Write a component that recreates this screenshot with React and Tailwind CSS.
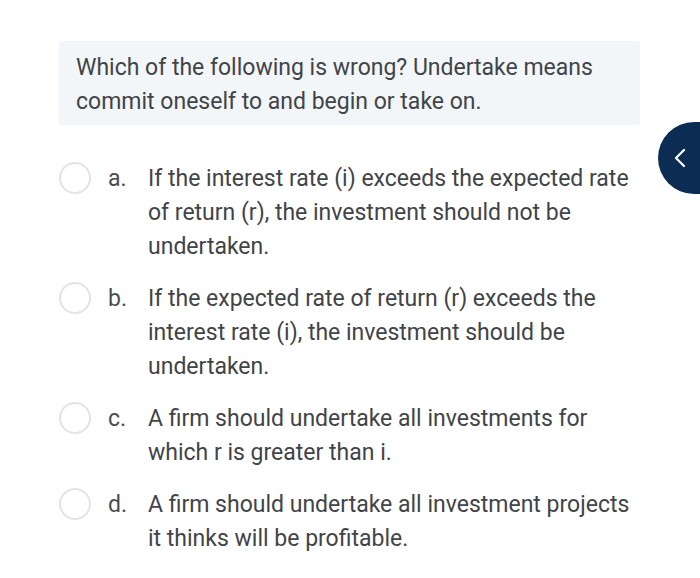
import React from "react";

const options = [
  { l: "a.", t: "If the interest rate (i) exceeds the expected rate of return (r), the investment should not be undertaken." },
  { l: "b.", t: "If the expected rate of return (r) exceeds the interest rate (i), the investment should be undertaken." },
  { l: "c.", t: "A firm should undertake all investments for which r is greater than i." },
  { l: "d.", t: "A firm should undertake all investment projects it thinks will be profitable." },
];

export default function App() {
  return (
    <div
      className="relative w-[700px] h-[578px] bg-white overflow-hidden text-[#414448]"
      style={{ fontFamily: "Roboto, 'Noto Sans', sans-serif" }}
    >
      <div className="pl-[59px] pt-[41px] w-[640px]">
        <div className="bg-[#f3f6f8] rounded-[3px] h-[84px] pl-[17px] pr-[16px] pt-[10px] pb-[6px] text-[23px] leading-[34px]">
          Which of the following is wrong? Undertake means commit oneself to and begin or take on.
        </div>
        <div className="mt-[37px] flex flex-col gap-[18px]">
          {options.map((o) => (
            <div key={o.l} className="flex items-start">
              <div className="w-[32px] h-[32px] rounded-full border-2 border-[#e3e3e3] shrink-0" />
              <div className="w-[40px] ml-[17px] text-[23px] leading-[34px] text-[#4a4d50] shrink-0">{o.l}</div>
              <div className="w-[492px] text-[23px] leading-[34px]">{o.t}</div>
            </div>
          ))}
        </div>
      </div>
      <div className="absolute left-[658px] top-[122px] w-[60px] h-[72px] rounded-l-full bg-[#0c2d53] flex items-center pl-[15px]">
        <svg width="14" height="22" viewBox="0 0 14 22" fill="none">
          <path d="M11 3L3 11L11 19" stroke="white" strokeWidth="2.2" strokeLinecap="round" strokeLinejoin="round" />
        </svg>
      </div>
    </div>
  );
}
